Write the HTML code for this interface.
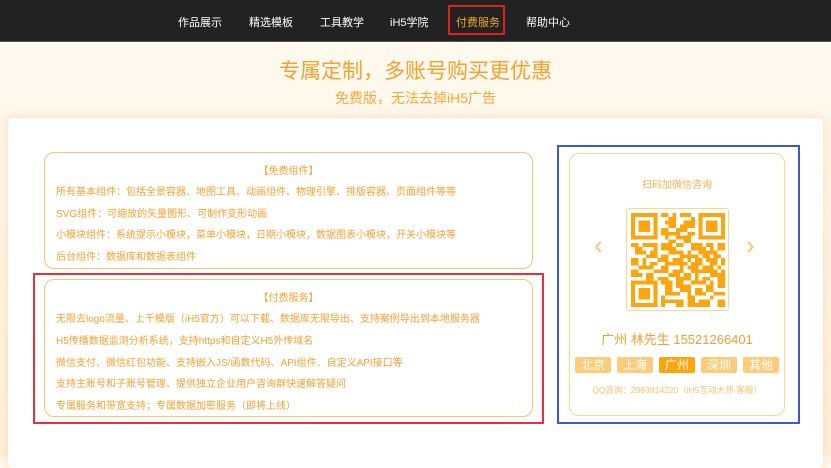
<!DOCTYPE html>
<html><head><meta charset="utf-8"><style>
*{margin:0;padding:0;box-sizing:border-box}
body{width:831px;height:456px;overflow:hidden;font-family:"Liberation Sans","Noto Sans CJK SC",sans-serif;background:linear-gradient(180deg,#fff9ee 40px,#fff0dc 456px);position:relative}
.nav{position:absolute;left:0;top:0;width:831px;height:42px;background:#222;border-bottom:1px solid #555}
.nav span{position:absolute;top:14px;font-size:11px;color:#fff}
.h1{position:absolute;top:55px;width:100%;text-align:center;font-size:21px;color:#f7a030}
.h2{position:absolute;top:88px;width:100%;text-align:center;font-size:14px;color:#f8a93c}
.card{position:absolute;left:8px;top:118px;width:815px;height:350px;background:#fff;border-radius:5px;box-shadow:0 0 10px rgba(255,190,120,.5)}
.box{position:absolute;left:44px;width:489px;border:1px solid #fbc27c;border-radius:10px;font-size:10px;color:#f8a032}
.box div{position:absolute;left:11px;white-space:nowrap}
.box .t{left:0;width:100%;text-align:center}
.right{position:absolute;left:569px;top:153px;width:216px;height:263px;border:1px solid #fdd58e;border-radius:10px}
.city{position:absolute;top:357px;width:36px;height:16px;background:#fccc7a;color:#fff;font-size:12px;text-align:center;line-height:16px;border-radius:2px}
</style></head><body>
<div class="nav">
<span style="left:178px">作品展示</span>
<span style="left:249px">精选模板</span>
<span style="left:320px">工具教学</span>
<span style="left:390px">iH5学院</span>
<span style="left:456px;color:#f6a623">付费服务</span>
<div style="position:absolute;left:448px;top:5px;width:57px;height:30px;border:2px solid #e02020"></div>
<span style="left:526px">帮助中心</span>
</div>
<div class="h1">专属定制，多账号购买更优惠</div>
<div class="h2">免费版，无法去掉iH5广告</div>
<div class="card"></div>
<div class="box" style="top:152px;height:117px">
<div class="t" style="top:9px">【免费组件】</div>
<div style="top:30px">所有基本组件：包括全景容器、地图工具、动画组件、物理引擎、排版容器、页面组件等等</div>
<div style="top:52px">SVG组件：可缩放的矢量图形、可制作变形动画</div>
<div style="top:73px">小模块组件：系统提示小模块，菜单小模块，日期小模块，数据图表小模块，开关小模块等</div>
<div style="top:95px">后台组件：数据库和数据表组件</div>
</div>
<div style="position:absolute;left:33px;top:273px;width:511px;height:151px;border:2px solid #e8303a"></div>
<div class="box" style="top:279px;height:138px">
<div class="t" style="top:9px">【付费服务】</div>
<div style="top:30px">无限去logo流量、上千模版（iH5官方）可以下载、数据库无限导出、支持案例导出到本地服务器</div>
<div style="top:52px">H5传播数据监测分析系统，支持https和自定义H5外传域名</div>
<div style="top:74px">微信支付、微信红包功能、支持嵌入JS/函数代码、API组件、自定义API接口等</div>
<div style="top:95px">支持主账号和子账号管理、提供独立企业用户咨询群快速解答疑问</div>
<div style="top:117px">专属服务和带宽支持；专属数据加密服务（即将上线）</div>
</div>
<div style="position:absolute;left:557px;top:145px;width:243px;height:279px;border:2px solid #3a5bd0"></div>
<div class="right"></div>
<div style="position:absolute;left:569px;top:176px;width:216px;text-align:center;font-size:10px;color:#f8b050">扫码加微信咨询</div>
<div style="position:absolute;left:594px;top:230px;font-size:26px;color:#fcc070;font-weight:100">‹</div>
<div style="position:absolute;left:746px;top:230px;font-size:26px;color:#fcc070;font-weight:100">›</div>
<div style="position:absolute;left:626px;top:208px;width:103px;height:103px;border:1px solid #fdd58e;border-radius:3px"></div>
<svg style="position:absolute;left:631px;top:213px" width="94" height="94" viewBox="0 0 25 25" shape-rendering="crispEdges" fill="#fda50f">
<path d="M0 0h7v7h-7zM1 1v5h5v-5zM2 2h3v3h-3z M18 0h7v7h-7zM19 1v5h5v-5zM20 2h3v3h-3z M0 18h7v7h-7zM1 19v5h5v-5zM2 20h3v3h-3z" fill-rule="evenodd"/>
<path d="M8 0h2v1h-2zM11 0h1v2h-1zM13 0h3v1h-3zM9 2h3v1h-3zM14 2h2v2h-2zM8 4h2v2h-2zM12 4h1v3h-1zM15 5h2v1h-2zM9 6h1v1h-1zM13 6h3v1h-3z
M0 8h2v1h-2zM3 8h4v1h-4zM8 8h3v2h-3zM12 8h2v1h-2zM16 8h3v2h-3zM20 8h2v1h-2zM23 8h2v2h-2z
M1 10h3v1h-3zM5 10h2v2h-2zM10 10h4v1h-4zM15 10h1v3h-1zM18 10h3v1h-3zM22 10h1v2h-1z
M0 12h2v2h-2zM3 12h1v2h-1zM7 12h3v1h-3zM11 12h3v2h-3zM17 12h2v2h-2zM20 12h3v1h-3zM24 12h1v2h-1z
M2 14h4v1h-4zM8 14h2v2h-2zM13 14h1v2h-1zM15 14h3v1h-3zM19 14h3v2h-3zM23 14h1v1h-1z
M0 16h3v1h-3zM4 16h2v2h-2zM10 16h3v1h-3zM14 16h2v2h-2zM17 16h1v2h-1zM21 16h4v1h-4z
M8 18h3v1h-3zM12 18h2v2h-2zM16 18h4v1h-4zM21 18h1v3h-1zM23 18h2v2h-2z
M9 20h2v2h-2zM13 20h3v1h-3zM17 20h2v2h-2zM19 21h1v1h-1zM22 21h3v1h-3z
M8 22h1v3h-1zM10 23h4v1h-4zM15 22h2v2h-2zM18 23h3v2h-3zM23 23h2v2h-2zM12 24h2v1h-2z
M10 1h1v1h-1zM16 1h1v3h-1zM10 3h2v1h-2zM13 3h1v2h-1zM9 5h3v1h-3zM14 4h1v1h-1zM10 7h2v1h-2zM14 7h2v1h-2z
M1 9h2v1h-2zM6 9h1v1h-1zM11 9h1v1h-1zM19 9h1v1h-1zM21 9h1v2h-1zM4 11h1v1h-1zM8 11h2v1h-2zM13 11h2v1h-2zM16 11h2v1h-2zM19 11h2v1h-2zM23 11h1v1h-1z
M5 13h2v1h-2zM9 13h2v1h-2zM14 13h1v1h-1zM16 13h1v1h-1zM21 13h2v1h-2zM0 15h2v1h-2zM6 15h2v1h-2zM11 15h2v1h-2zM16 15h3v1h-3zM22 15h1v1h-1zM24 15h1v1h-1z
M7 17h3v1h-3zM12 17h2v1h-2zM19 17h2v1h-2zM23 17h2v1h-2zM9 19h2v1h-2zM14 19h2v1h-2zM20 19h1v2h-1zM11 21h2v1h-2zM15 21h1v1h-1zM9 23h1v1h-1zM15 24h2v1h-2zM21 22h1v1h-1zM17 24h1v1h-1z"/>
</svg>
<div style="position:absolute;left:569px;top:329px;width:216px;text-align:center;font-size:13px;color:#f7a030">广州 林先生 15521266401</div>
<div class="city" style="left:575px">北京</div>
<div class="city" style="left:617px">上海</div>
<div class="city" style="left:659px;background:#fda50f">广州</div>
<div class="city" style="left:701px">深圳</div>
<div class="city" style="left:743px">其他</div>
<div style="position:absolute;left:569px;top:384px;width:216px;text-align:center;font-size:8.5px;color:#fcc070">QQ咨询：2963814220（iH5互动大师-客服）</div>
</body></html>
